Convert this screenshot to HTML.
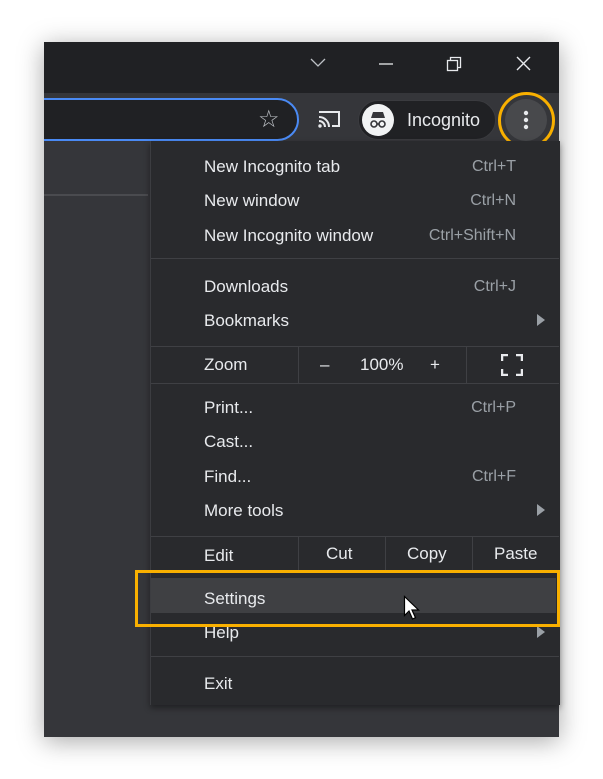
<!DOCTYPE html><html><head><style>
body{margin:0;width:603px;height:779px;background:#fff;position:relative;overflow:hidden;font-family:"Liberation Sans",sans-serif}
.a{position:absolute}
.win{left:44px;top:42px;width:515px;height:695px;background:#35363a;box-shadow:0 4px 24px rgba(0,0,0,.35)}
.t{position:absolute;color:#e8eaed;font-size:17px;line-height:20px;white-space:nowrap}
.s{position:absolute;color:#9aa0a6;font-size:16px;line-height:20px;right:87px;white-space:nowrap}
.sep{position:absolute;left:151px;width:408px;height:1px;background:#3f4044}
.vd{position:absolute;width:1px;background:#3f4044}
.arr{position:absolute;left:537px;width:0;height:0;border-left:8px solid #9aa0a6;border-top:6px solid transparent;border-bottom:6px solid transparent}
</style></head><body>
<div class="a win"></div>
<div class="a" style="left:44px;top:42px;width:515px;height:51px;background:#202124"></div>
<svg class="a" style="left:44px;top:42px" width="515" height="100">
<path d="M267 17l7 7 7-7" stroke="#bdc1c6" stroke-width="1.3" fill="none"/>
<path d="M335 22h14" stroke="#e8eaed" stroke-width="1.3"/>
<rect x="403.5" y="18.5" width="10" height="10" stroke="#e8eaed" stroke-width="1.3" fill="none"/>
<path d="M406.5 18.5v-3h10v10h-3" stroke="#e8eaed" stroke-width="1.3" fill="none"/>
<path d="M473 15l13 13M486 15l-13 13" stroke="#e8eaed" stroke-width="1.4"/>
</svg>
<div class="a" style="left:44px;top:96px;width:260px;height:46px;overflow:hidden">
<div class="a" style="left:-30px;top:2px;width:281px;height:39px;border:2px solid #4a8af4;border-radius:22px;background:#202124"></div>
</div>
<div class="a" style="left:258px;top:106px;color:#bdc1c6;font-size:24px;line-height:28px">☆</div>
<svg class="a" style="left:316px;top:108px" width="28" height="24"><path d="M3 4h20v14h-7" stroke="#e8eaed" stroke-width="2" fill="none"/><path d="M3 9a10 10 0 0 1 10 10M3 13a6 6 0 0 1 6 6" stroke="#e8eaed" stroke-width="2" fill="none"/><circle cx="4" cy="18" r="1.7" fill="#e8eaed"/></svg>
<div class="a" style="left:358px;top:100px;width:138px;height:40px;border-radius:20px;background:#202124;border:1px solid #3a3b3f;box-sizing:border-box"></div>
<div class="a" style="left:362px;top:104px;width:32px;height:32px;border-radius:50%;background:#f1f3f4"></div>
<svg class="a" style="left:362px;top:104px" width="32" height="32"><path d="M9 14h14l-2-6h-10z" fill="#35363a"/><circle cx="12" cy="20" r="3" stroke="#35363a" stroke-width="1.6" fill="none"/><circle cx="20" cy="20" r="3" stroke="#35363a" stroke-width="1.6" fill="none"/><path d="M15 20h2" stroke="#35363a" stroke-width="1.6"/></svg>
<div class="t" style="left:407px;top:110px;font-size:18px">Incognito</div>
<div class="a" style="left:505px;top:99px;width:42px;height:42px;border-radius:50%;background:#48494c"></div>
<svg class="a" style="left:518px;top:105px" width="16" height="30"><circle cx="8" cy="8" r="2.2" fill="#e8eaed"/><circle cx="8" cy="15" r="2.2" fill="#e8eaed"/><circle cx="8" cy="22" r="2.2" fill="#e8eaed"/></svg>
<div class="a" style="border-radius:50%;border:3px solid #f9b000;box-sizing:border-box;left:498px;top:92px;width:57px;height:57px"></div>
<div class="a" style="left:44px;top:194px;width:104px;height:2px;background:#4a4b4f"></div>
<div class="a" style="left:150px;top:141px;width:409px;height:564px;background:#292a2d;border-left:1px solid #3c3d41;box-shadow:0 3px 6px rgba(0,0,0,.4)"></div>
<div class="t" style="left:204px;top:157px">New Incognito tab</div><div class="s" style="top:157px">Ctrl+T</div>
<div class="t" style="left:204px;top:191px">New window</div><div class="s" style="top:191px">Ctrl+N</div>
<div class="t" style="left:204px;top:226px">New Incognito window</div><div class="s" style="top:226px">Ctrl+Shift+N</div>
<div class="sep" style="top:258px"></div>
<div class="t" style="left:204px;top:277px">Downloads</div><div class="s" style="top:277px">Ctrl+J</div>
<div class="t" style="left:204px;top:311px">Bookmarks</div><div class="arr" style="top:314px"></div>
<div class="sep" style="top:346px"></div>
<div class="t" style="left:204px;top:355px">Zoom</div>
<div class="vd" style="left:298px;top:347px;height:36px"></div><div class="vd" style="left:466px;top:347px;height:36px"></div>
<div class="t" style="left:320px;top:355px">–</div><div class="t" style="left:360px;top:355px">100%</div><div class="t" style="left:430px;top:355px">+</div>
<svg class="a" style="left:501px;top:354px" width="22" height="22"><path d="M1 7V1h6M15 1h6v6M21 15v6h-6M7 21H1v-6" stroke="#e8eaed" stroke-width="2.5" fill="none"/></svg>
<div class="sep" style="top:383px"></div>
<div class="t" style="left:204px;top:398px">Print...</div><div class="s" style="top:398px">Ctrl+P</div>
<div class="t" style="left:204px;top:432px">Cast...</div>
<div class="t" style="left:204px;top:467px">Find...</div><div class="s" style="top:467px">Ctrl+F</div>
<div class="t" style="left:204px;top:501px">More tools</div><div class="arr" style="top:504px"></div>
<div class="sep" style="top:536px"></div>
<div class="t" style="left:204px;top:546px">Edit</div>
<div class="vd" style="left:298px;top:537px;height:33px"></div><div class="vd" style="left:385px;top:537px;height:33px"></div><div class="vd" style="left:472px;top:537px;height:33px"></div>
<div class="t" style="left:326px;top:544px">Cut</div><div class="t" style="left:407px;top:544px">Copy</div><div class="t" style="left:494px;top:544px">Paste</div>
<div class="a" style="left:151px;top:578px;width:405px;height:35px;background:#3f4043"></div>
<div class="t" style="left:204px;top:589px">Settings</div>
<div class="t" style="left:204px;top:623px">Help</div><div class="arr" style="top:626px"></div>
<div class="sep" style="top:656px"></div>
<div class="t" style="left:204px;top:674px">Exit</div>
<svg class="a" style="left:403px;top:595px" width="18" height="28"><path d="M1.5 1.5v19l4.5-4.5 3.5 8 3-1.3-3.5-7.7h6.5z" fill="#fff" stroke="#000" stroke-width="1.2"/></svg>
<div class="a" style="left:135px;top:570px;width:425px;height:57px;border:3px solid #f9b000;box-sizing:border-box"></div>
</body></html>
